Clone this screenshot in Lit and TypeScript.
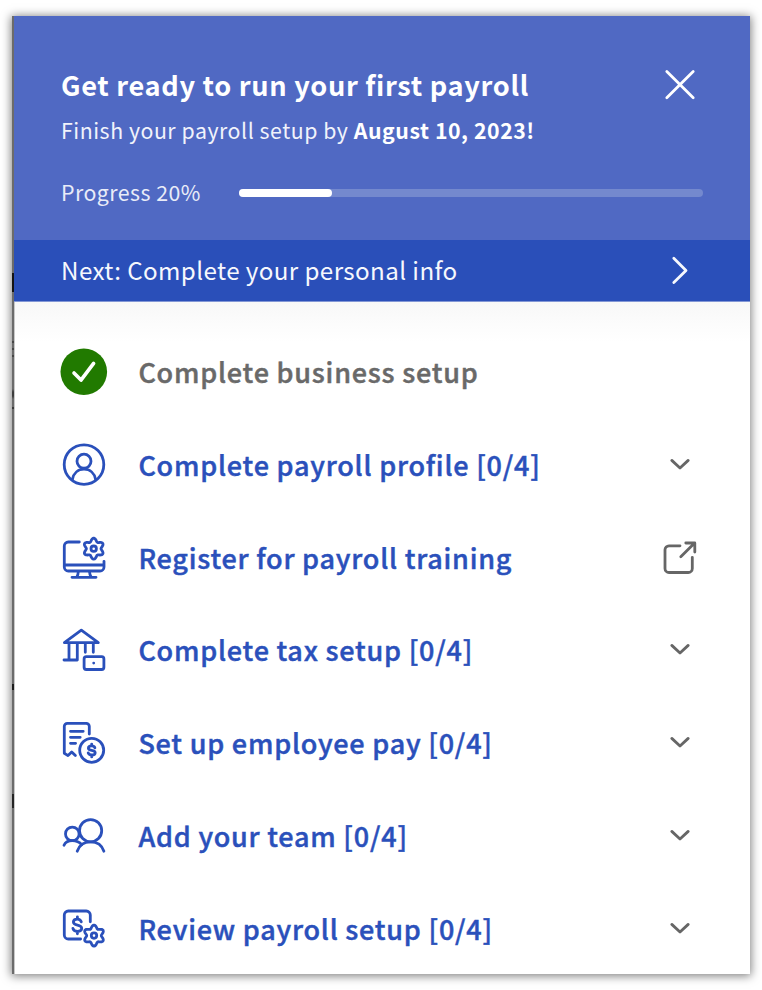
import { LitElement, html, svg, css } from "lit";
import { customElement, property } from "lit/decorators.js";

type Task = { label: string; icon: string; end?: "chevron" | "external"; done?: boolean };

const TASKS: Task[] = [
  { label: "Complete business setup", icon: "check", done: true },
  { label: "Complete payroll profile [0/4]", icon: "profile", end: "chevron" },
  { label: "Register for payroll training", icon: "training", end: "external" },
  { label: "Complete tax setup [0/4]", icon: "tax", end: "chevron" },
  { label: "Set up employee pay [0/4]", icon: "pay", end: "chevron" },
  { label: "Add your team [0/4]", icon: "team", end: "chevron" },
  { label: "Review payroll setup [0/4]", icon: "review", end: "chevron" },
];

/** Six-lobed cog outline around a centre point. */
function cog(cx: number, cy: number): string {
  const points: string[] = [];
  for (let i = 0; i < 72; i++) {
    const a = (i / 72) * Math.PI * 2;
    const r = 8.9 + 1.6 * Math.cos(6 * a);
    points.push(`${(cx + r * Math.sin(a)).toFixed(2)} ${(cy - r * Math.cos(a)).toFixed(2)}`);
  }
  return `M${points.join("L")}Z`;
}

const ICONS: Record<string, unknown> = {
  check: svg`<circle cx="23.8" cy="23.8" r="23.3" fill="#217a00" stroke="none"/>
    <path class="tick" d="M14 25L21 32.1L33.6 15.4"/>`,
  profile: svg`<circle cx="24" cy="23.6" r="19.8"/><circle cx="24" cy="20.2" r="7"/>
    <path d="M12.4 38.4C13.6 32.2 18 28.2 24 28.2S34.4 32.2 35.6 38.4"/>`,
  training: svg`<path d="M19.3 8H8.3a4 4 0 0 0-4 4V33a4 4 0 0 0 4 4H40a4 4 0 0 0 4-4V27.3M4.3 31H44"/>
    <path d="M18.3 37.5C18.2 40 17.8 41.6 16.8 43.2M29.5 37.5C29.6 40 30.2 41.6 31.2 43.2M12 43.3H36"/>
    <path d=${cog(33.7, 14.7)}/><circle cx="33.7" cy="14.7" r="2.7"/>`,
  tax: svg`<path d="M4.4 16.7L21.3 4.2L38.3 16.7ZM9 16.7V34M17.3 16.7V34M4 34H17.3M25.3 16.7V26.3M33.3 16.7V26.3"/>
    <rect x="24.1" y="30.7" width="19.8" height="12.8" rx="2.2"/><circle class="dot" cx="33.7" cy="37.1" r="1.4"/>`,
  pay: svg`<path d="M29.3 15V7.3a3 3 0 0 0-3-3H7.3a3 3 0 0 0-3 3V34.3L8 36.6L11.7 32.9L15.4 36.6M10.5 12.3H23.2M10.5 18.3H20.2M10.5 24.3H15.6"/>
    <circle cx="31.7" cy="31.3" r="12"/>
    <path d="M34.9 28.8C34.5 27.5 33.2 26.9 31.6 26.9C29.7 26.9 28.4 27.8 28.4 29.2C28.4 32.4 35.2 30.2 35.2 33.7C35.2 35.1 33.8 36 31.8 36C30 36 28.6 35.3 28.2 33.9M31.7 25.1V26.9M31.7 36V37.9"/>`,
  team: svg`<circle cx="30.6" cy="18.7" r="11.1"/><path d="M17.2 39.2C19.2 33.3 24.2 29.8 30.6 29.8S42 33.3 43.9 39.2"/>
    <circle cx="12.3" cy="21.9" r="6.8"/><path d="M4 33.3C5.3 30.3 8.3 28.7 12.3 28.7C16.2 28.7 19.6 30.2 21.8 32.8"/>`,
  review: svg`<path d="M30.3 16.8V10a4 4 0 0 0-4-4H8.3a4 4 0 0 0-4 4V30a4 4 0 0 0 4 4H20.6"/>
    <path d="M21.3 16.9C20.8 15.1 19.4 14.1 17.3 14.1C15 14.1 13.4 15.3 13.4 17.1C13.4 21.5 21.7 18.7 21.7 23.3C21.7 25.1 20 26.3 17.5 26.3C15.1 26.3 13.4 25.3 12.9 23.4M17.4 11.8V14.1M17.4 26.3V28.8"/>
    <path d=${cog(34, 30.6)}/><circle cx="34" cy="30.6" r="2.7"/>`,
  chevron: svg`<path class="bold" d="M15.8 19.4L24 27L32.2 19.4"/>`,
  external: svg`<path d="M24 11.8H13a4 4 0 0 0-4 4V34.5a4 4 0 0 0 4 4H32.3a4 4 0 0 0 4-4V23.3M24.8 22.8L38.6 9M29.8 9H38.8V18"/>`,
  close: svg`<path d="M10.8 10.4L37.2 36.8M37.2 10.4L10.8 36.8"/>`,
  next: svg`<path class="bold" d="M17.8 12.3L30 24.4L17.8 36.5"/>`,
};

@customElement("setup-icon")
class SetupIcon extends LitElement {
  @property() name = "";

  static styles = css`
    :host { display: block; flex: none; width: 48px; height: 48px; }
    .art {
      display: block; width: 48px; height: 48px; fill: none; stroke: currentColor;
      stroke-width: 2.8; stroke-linecap: round; stroke-linejoin: round;
    }
    .bold { stroke-width: 2.8; }
    .tick { stroke: #fff; stroke-width: 3.6; }
    .dot { fill: currentColor; stroke: none; }
  `;

  render() {
    return html`<svg class="art" viewBox="0 0 48 48" aria-hidden="true">${ICONS[this.name]}</svg>`;
  }
}

@customElement("task-row")
class TaskRow extends LitElement {
  @property({ attribute: false }) task!: Task;

  static styles = css`
    :host { display: block; }
    .row { display: flex; align-items: center; height: 92.8px; padding: 0 46px; color: #2a50bb; }
    .done { color: #696969; }
    .label {
      flex: 1; margin-left: 30.4px; font-size: 27px; line-height: 40px; font-weight: 500;
      letter-spacing: 0.78px; white-space: nowrap; -webkit-text-stroke: 0.45px currentColor;
    }
    .end { color: #666; }
  `;

  render() {
    const t = this.task;
    return html`<div class="row ${t.done ? "done" : ""}">
      <setup-icon .name=${t.icon}></setup-icon>
      <span class="label">${t.label}</span>
      ${t.end ? html`<setup-icon class="end" .name=${t.end}></setup-icon>` : ""}
    </div>`;
  }
}

@customElement("app-root")
class AppRoot extends LitElement {
  static styles = css`
    :host {
      display: block; box-sizing: border-box; height: 990px; padding: 16px 12px; overflow: hidden;
      background: #fff; font-family: "Noto Sans CJK SC", "Noto Sans CJK JP", sans-serif;
    }
    .card { display: flex; height: 958px; background: #fff; box-shadow: 0 1px 9px 1px rgba(0, 0, 0, 0.5); }
    .edge {
      flex: none; width: 2px;
      background: linear-gradient(#6b6b6b 257px, #141414 257px 276px, #6b6b6b 276px 325px,
        #454545 325px 327px, #6b6b6b 327px 332px, #454545 332px 334px, #6b6b6b 334px 339px,
        #454545 339px 341px, #6b6b6b 341px 373px, #3c3c3c 376px 380px, #6b6b6b 383px 391px,
        #383838 391px 393px, #6b6b6b 393px 668px, #1c1c1c 668px 674px, #6b6b6b 674px 778px,
        #242424 778px 792px, #6b6b6b 792px);
    }
    .panel { flex: 1; min-width: 0; overflow: hidden; }
    .head { box-sizing: border-box; height: 223.5px; padding: 45px 46px 0 47px; background: #5069c3; color: #fff; }
    .top { display: flex; justify-content: space-between; height: 48px; align-items: center; }
    .title { margin: -2px 0 0; font-size: 27.2px; line-height: 40px; font-weight: 700; letter-spacing: 0.67px; white-space: nowrap; }
    .sub { margin: 4.5px 0 0; font-size: 21.3px; line-height: 32px; letter-spacing: 0.54px; white-space: nowrap; color: #f1f3fb; }
    .date { font-weight: 700; color: #fff; }
    .progress { display: flex; align-items: center; margin-top: 30px; }
    .amount { width: 178px; font-size: 21.3px; line-height: 32px; letter-spacing: 0.47px; white-space: nowrap; color: #e9ecf8; }
    .track { flex: none; width: 464px; height: 8px; margin-top: 2px; border-radius: 4px; background: #7489ce; }
    .fill { height: 8px; border-radius: 4px; background: #fff; }
    .next {
      display: flex; align-items: center; justify-content: space-between; height: 61px; padding: 0 46px 0 47px;
      background: #2a4fb9; color: #f6f8fd; border-bottom: 1px solid #8297d5;
    }
    .step { margin-top: -1px; font-size: 24.2px; line-height: 36px; letter-spacing: 0.4px; white-space: nowrap; }
    .list { padding-top: 24.2px; background: linear-gradient(90deg, #c8c8c8 1px, transparent 1px), linear-gradient(#f8f8f8, #fff 40px); }
  `;

  private progress = 20;

  render() {
    return html`<div class="card">
      <div class="edge"></div>
      <div class="panel">
        <header class="head">
          <div class="top">
            <h1 class="title">Get ready to run your first payroll</h1>
            <setup-icon .name=${"close"}></setup-icon>
          </div>
          <p class="sub">Finish your payroll setup by <span class="date">August 10, 2023!</span></p>
          <div class="progress">
            <span class="amount">Progress ${this.progress}%</span>
            <div class="track"><div class="fill" style="width:${this.progress}%"></div></div>
          </div>
        </header>
        <div class="next">
          <span class="step">Next: Complete your personal info</span>
          <setup-icon .name=${"next"}></setup-icon>
        </div>
        <div class="list">${TASKS.map((t) => html`<task-row .task=${t}></task-row>`)}</div>
      </div>
    </div>`;
  }
}
